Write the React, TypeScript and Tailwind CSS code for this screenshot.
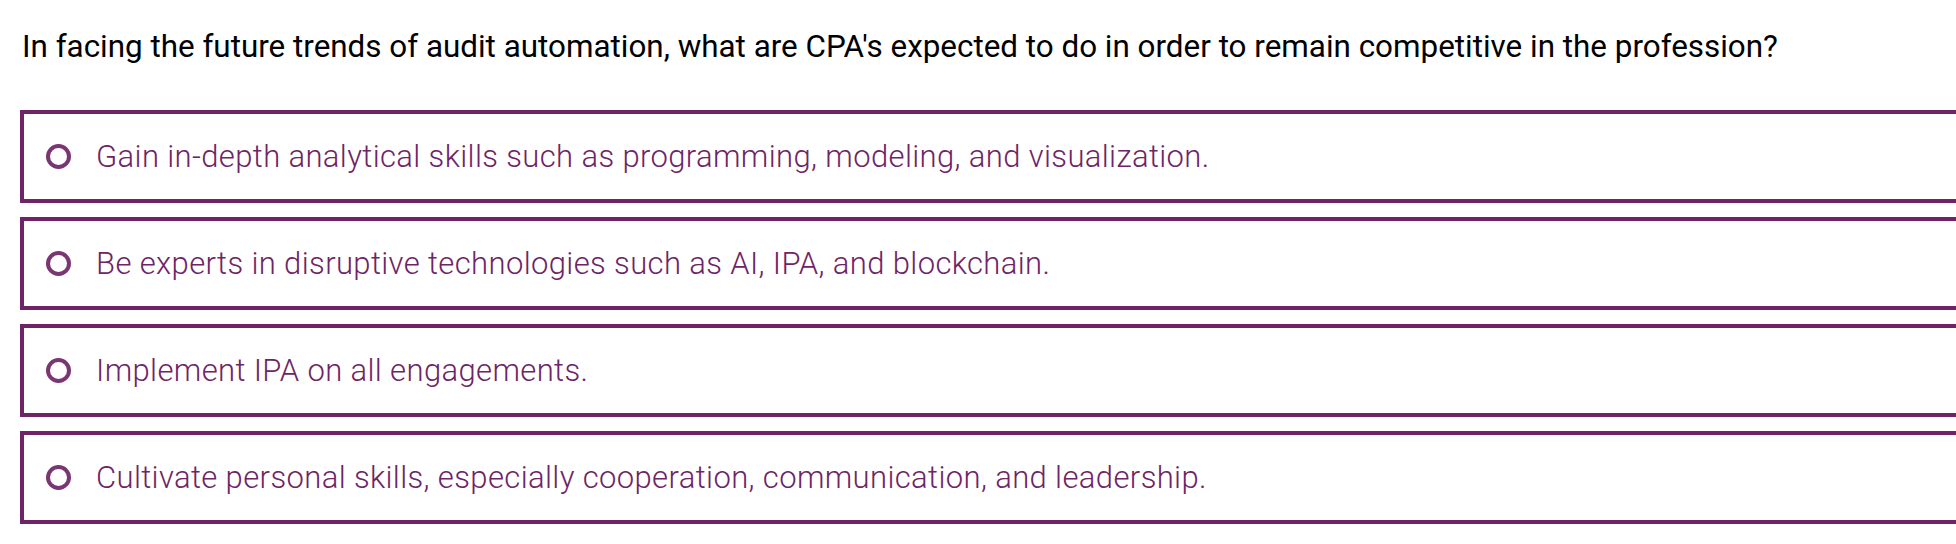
const options = [
  'Gain in-depth analytical skills such as programming, modeling, and visualization.',
  'Be experts in disruptive technologies such as AI, IPA, and blockchain.',
  'Implement IPA on all engagements.',
  'Cultivate personal skills, especially cooperation, communication, and leadership.',
];

export default function App() {
  return (
    <div className="w-[1956px] h-[544px] bg-white overflow-hidden pl-5 pt-[28px]" style={{ fontFamily: 'Roboto, "Liberation Sans", sans-serif' }}>
      <p className="text-[31.4px] leading-[37px] text-black pl-[2px]">
        In facing the future trends of audit automation, what are CPA's expected to do in order to remain competitive in the profession?
      </p>

      <div className="mt-[45px] flex flex-col gap-[14px]">
        {options.map((opt) => (
          <label
            key={opt}
            className="h-[93px] border-4 border-r-0 border-[#6e2466] flex items-center pl-[22px] cursor-pointer"
          >
            <span className="w-[25px] h-[25px] rounded-full border-[4px] border-[#7a3573] shrink-0" />
            <span className="ml-[25px] text-[31px] font-light tracking-[0.37px] text-[#6e2466] leading-none">{opt}</span>
          </label>
        ))}
      </div>
    </div>
  );
}
